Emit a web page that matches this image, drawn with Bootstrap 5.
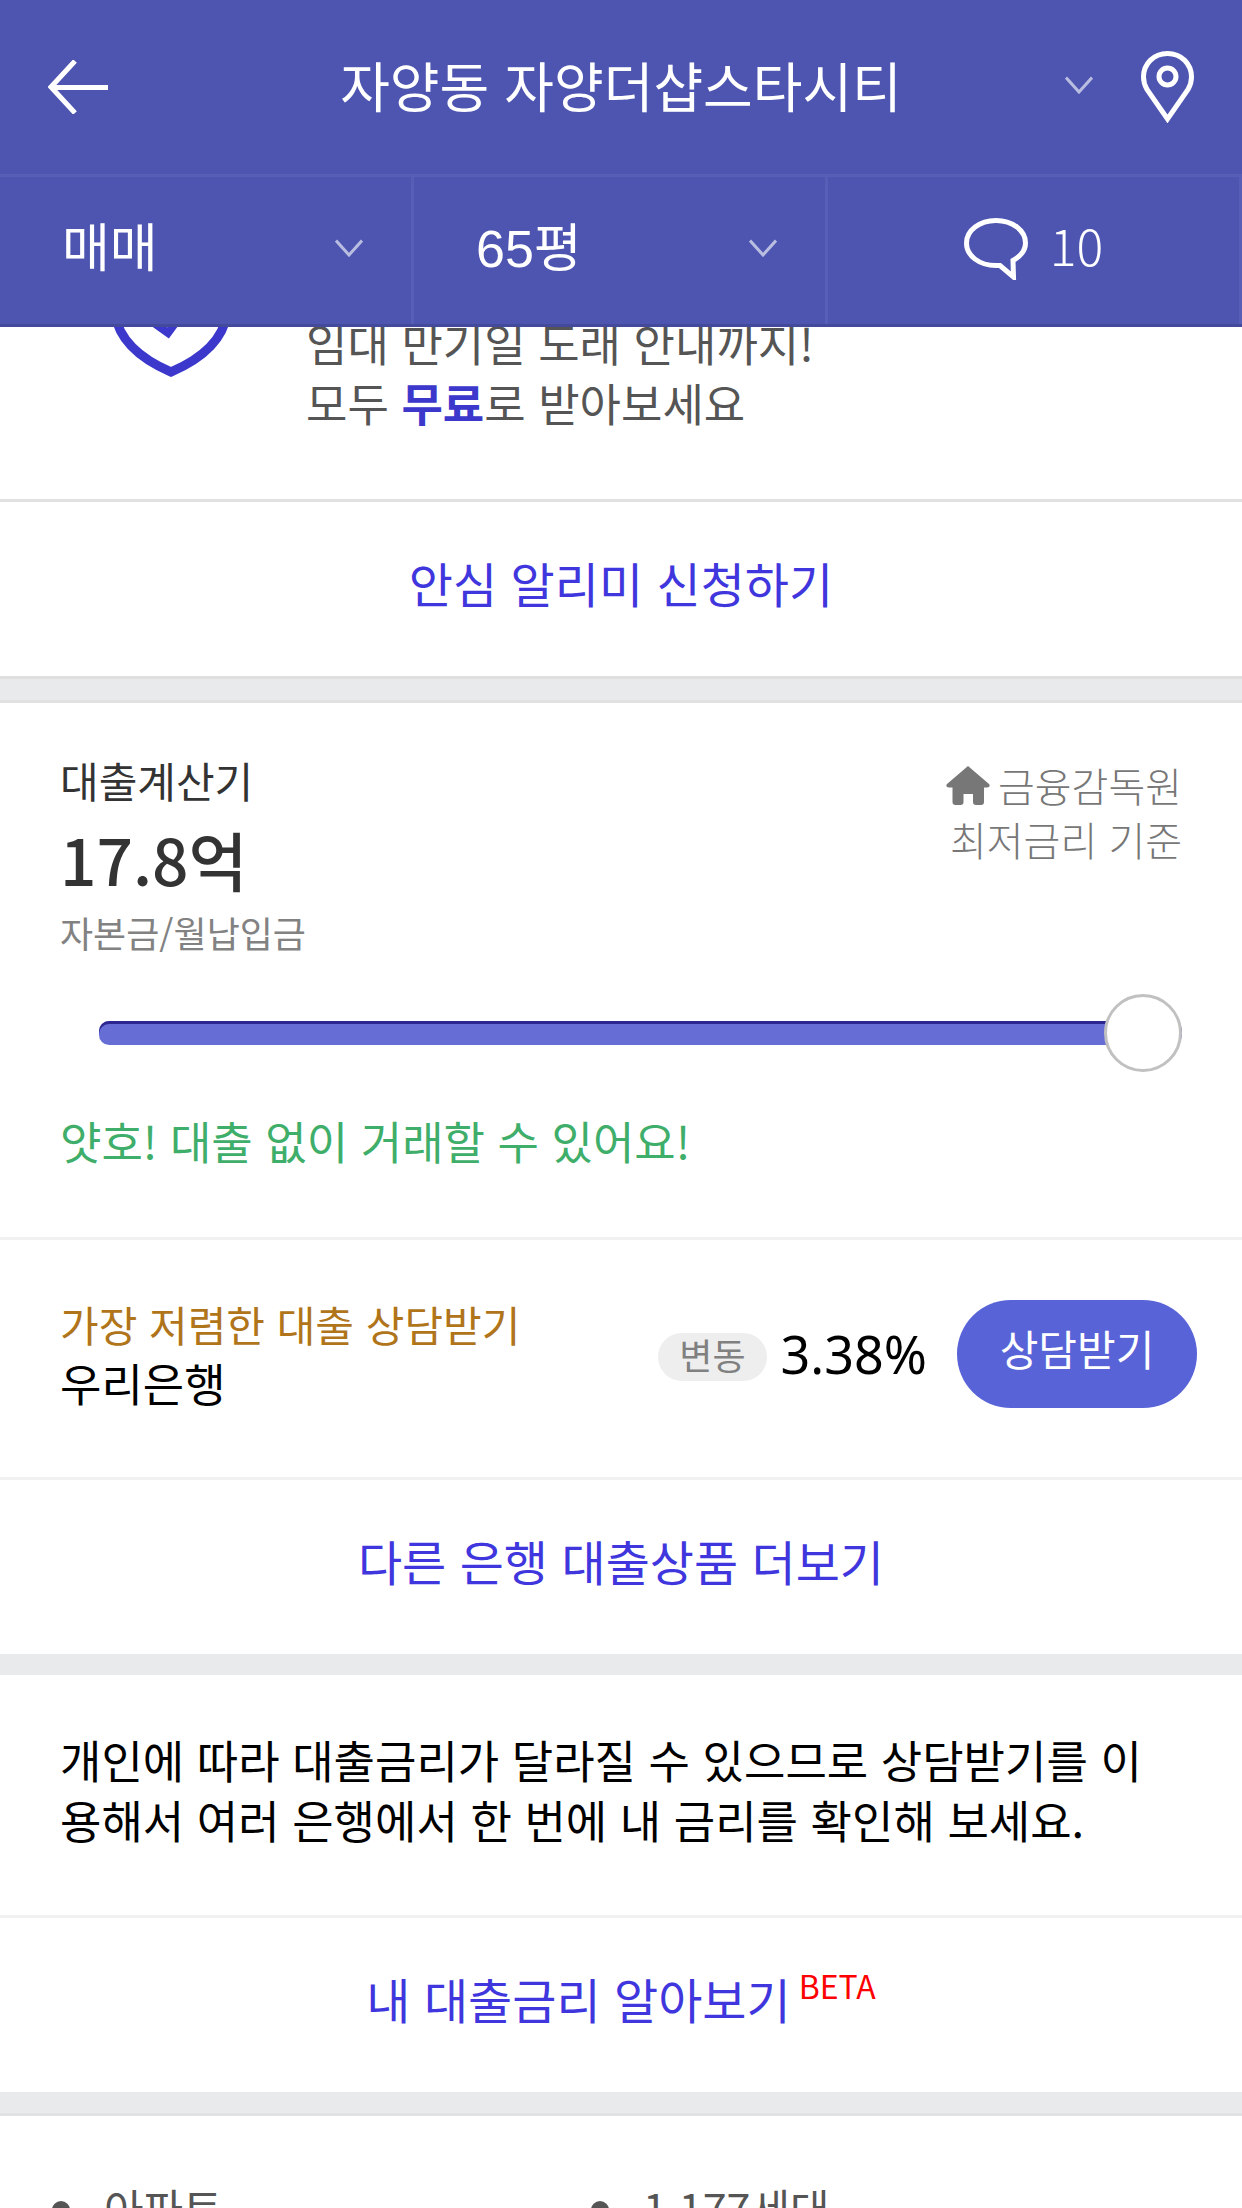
<!DOCTYPE html>
<html lang="ko">
<head>
<meta charset="utf-8">
<meta name="viewport" content="width=device-width, initial-scale=1">
<title>자양동 자양더샵스타시티</title>
<link href="https://cdn.jsdelivr.net/npm/bootstrap@5.3.0/dist/css/bootstrap.min.css" rel="stylesheet">
<style>
  body { font-family: "Noto Sans CJK KR", sans-serif; color: #000; background: #fff; line-height: 60px; }
  svg { display: block; flex: none; }

  .app-header { background: #4d55b1; color: #fff; border-bottom: 3px solid #444a9b; }
  .title-bar { display: grid; grid-template-columns: 1fr auto 1fr; align-items: center; height: 177px; padding: 0 48px; border-bottom: 3px solid #575eb6; }
  .title-bar h1 { font-size: 54px; line-height: 80px; font-weight: 400; margin: 0 0 4px; }
  .title-bar .btn { margin-bottom: 4px; }
  .filter-cell { position: relative; height: 147px; border-right: 3px solid #575eb6; }
  .filter-cell select { appearance: none; width: 100%; height: 100%; padding: 0 62px 4px 62px; border: 0; background: transparent; color: #fff; font-family: "Liberation Sans", "Noto Sans CJK KR", sans-serif; font-size: 52px; }
  .filter-cell select option { color: #000; }
  .filter-cell .chevron { position: absolute; right: 48px; top: 62px; pointer-events: none; }
  .comment-count { font-size: 50px; font-weight: 300; color: #fff; gap: 22px; padding-bottom: 4px; }
  .comment-count span { padding-bottom: 10px; }

  .pad { padding-left: 60px; padding-right: 60px; }
  .alert-intro { margin-top: -80px; padding-top: 66px; padding-bottom: 66px; gap: 24px; font-size: 45px; color: #555; }
  .shield-box { width: 222px; height: 120px; }
  .alert-intro strong { color: #3c38cc; }

  .more-link { display: block; padding: 50px 0 64px; border-top: 3px solid #f1f1f1; text-align: center; font-size: 48px; color: #4036dd; text-decoration: none; }
  .more-link.edge { border-top-color: #e1e1e1; }
  .beta-tag { font-size: 32px; line-height: 32px; color: #f00; top: -20px; margin-left: 8px; }
  .band { height: 21px; background: #e9eaec; }
  .band-both { box-sizing: content-box; border-top: 3px solid #dfdfdf; border-bottom: 3px solid #e1e1e1; }
  .band-low { box-sizing: content-box; border-bottom: 3px solid #e1e2e4; }
  .band-low, .band-both { height: 21px; }

  .calc { padding-top: 45px; padding-bottom: 66px; }
  .calc-title { font-size: 42px; line-height: 64px; color: #333; margin: 0; font-weight: 400; }
  .calc-price { font-size: 64px; line-height: 92px; font-weight: 500; color: #333; }
  .calc-label { display: block; font-size: 36px; line-height: 56px; color: #828282; }
  .calc-source { padding-top: 10px; font-size: 40px; line-height: 54px; font-weight: 300; color: #777; }
  .calc-ok { margin: 39px 0 0; font-size: 45px; color: #3fae6a; }
  .slider-box { padding-left: 39px; margin-top: 34px; }
  .loan-range { display: block; width: 100%; height: 78px; margin: 0; padding: 0; appearance: none; background: transparent; }
  .loan-range::-webkit-slider-runnable-track { height: 24px; border-radius: 10px; background: #666dd5; box-shadow: inset 0 3px #2c2691; }
  .loan-range::-webkit-slider-thumb { appearance: none; width: 78px; height: 78px; margin-top: -27px; border: 3px solid #c1c1c1; border-radius: 50%; background: #fff; }

  .bank-row { padding: 54px 45px 63px 60px; border-top: 3px solid #f1f1f1; }
  .bank-lead { font-size: 42px; color: #b0741a; }
  .bank-name { font-size: 45px; line-height: 58px; padding-bottom: 2px; }
  .rate-type { height: 48px; margin: 6px 14px 0 0; padding: 0 21px; border-radius: 24px; background: #eee; color: #808080; font-size: 36px; line-height: 42px; }
  .rate { font-family: "Noto Sans", sans-serif; font-size: 52px; margin-right: 30px; }
  .btn-consult { width: 240px; height: 108px; padding: 0 0 14px; border: 0; border-radius: 54px; background: #5863d8; color: #fff; font-size: 42px; }
  .notice { margin: 0; padding-top: 55px; padding-bottom: 65px; font-size: 45px; word-break: break-all; }
  .facts { margin: 0; padding: 61px 112px 40px 52px; font-size: 43px; color: #555; }
  .facts li { gap: 34px; }
  .facts li::before { content: ""; width: 18px; height: 18px; margin-top: 6px; border-radius: 50%; background: #555; }
</style>
</head>
<body>
<div class="vh-100 overflow-hidden">
  <header class="app-header sticky-top">
    <div class="title-bar">
      <a href="#" aria-label="뒤로">
        <svg width="60" height="54" viewBox="0 0 60 54" fill="none" stroke="#fff" stroke-width="5"><path d="M27 1 L3 27 L27 53 M3 27.500 H60"/></svg>
      </a>
      <h1>자양동 자양더샵스타시티</h1>
      <div class="d-flex align-items-center justify-content-end">
        <button type="button" class="btn p-0 border-0 me-5" aria-label="단지 선택">
          <svg width="28" height="18" viewBox="0 0 28 18" fill="none" stroke="#b9bde0" stroke-width="3"><path d="M1 1.500 L14 16 L27 1.500"/></svg>
        </button>
        <a href="#" aria-label="지도">
          <svg width="53" height="72" viewBox="0 0 53 72" fill="none" stroke="#fff" stroke-width="5"><path d="M26.500 2.500 C12.500 2.500 2.500 13 2.500 26 C2.500 31 4 35 6 38.500 L26.500 68 L47 38.500 C49 35 50.500 31 50.500 26 C50.500 13 40.500 2.500 26.500 2.500 Z"/><circle cx="26.500" cy="25.500" r="8.500"/></svg>
        </a>
      </div>
    </div>
    <div class="row g-0">
      <div class="col-4 filter-cell">
        <select aria-label="거래 유형"><option>매매</option></select>
        <svg class="chevron" width="28" height="18" viewBox="0 0 28 18" fill="none" stroke="#b9bde0" stroke-width="3"><path d="M1 1.500 L14 16 L27 1.500"/></svg>
      </div>
      <div class="col-4 filter-cell">
        <select aria-label="평형"><option>65평</option></select>
        <svg class="chevron" width="28" height="18" viewBox="0 0 28 18" fill="none" stroke="#b9bde0" stroke-width="3"><path d="M1 1.500 L14 16 L27 1.500"/></svg>
      </div>
      <div class="col-4 filter-cell">
        <a href="#" class="comment-count d-flex h-100 align-items-center justify-content-center text-decoration-none">
          <svg width="64" height="62" viewBox="0 0 64 62" fill="none" stroke="#fff" stroke-width="5"><path d="M49 42.500 C57 38 61.500 32.500 61.500 25 C61.500 12.500 48.500 2.500 32 2.500 C15.500 2.500 2.500 12.500 2.500 25 C2.500 38 15.500 47.500 32 47.500 H36 L49.500 59 Z"/></svg>
          <span>10</span>
        </a>
      </div>
    </div>
  </header>

  <main>
    <section>
      <div class="alert-intro pad d-flex">
        <div class="shield-box d-flex justify-content-center">
          <svg width="126" height="65" viewBox="0 0 126 65" fill="none" stroke="#3c38cc" stroke-width="9"><path d="M7 1 C11 27 33 46 63 59 C93 46 115 27 119 1"/><path d="M46 10 L60 20 L74 1" stroke-width="8"/></svg>
        </div>
        <div>임대 만기일 도래 안내까지!<br>모두 <strong>무료</strong>로 받아보세요</div>
      </div>
      <a href="#" class="more-link edge">안심 알리미 신청하기</a>
    </section>
    <div class="band band-both"></div>

    <section>
      <div class="calc pad">
        <div class="d-flex justify-content-between align-items-start">
          <div>
            <h2 class="calc-title">대출계산기</h2>
            <div class="calc-price">17.8억</div>
            <label class="calc-label" for="capital">자본금/월납입금</label>
          </div>
          <div class="calc-source text-end">
            <div class="d-flex align-items-center justify-content-end gap-2">
              <svg width="44" height="39" viewBox="0 0 44 39" fill="#777"><path d="M22 0 L43 18 Q45 21 41 21.500 H38 V36 Q38 39 35 39 H30 Q27 39 27 36 V28 H17.500 V36 Q17.500 39 14.500 39 H9.500 Q6.500 39 6.500 36 V21.500 H3 Q-1 21 1 18 Z"/></svg>
              <span>금융감독원</span>
            </div>
            <div>최저금리 기준</div>
          </div>
        </div>
        <div class="slider-box">
          <input class="loan-range" type="range" id="capital" min="0" max="100" value="100">
        </div>
        <p class="calc-ok">얏호! 대출 없이 거래할 수 있어요!</p>
      </div>

      <div class="bank-row d-flex align-items-center">
        <div class="me-auto">
          <div class="bank-lead">가장 저렴한 대출 상담받기</div>
          <div class="bank-name">우리은행</div>
        </div>
        <span class="rate-type">변동</span>
        <span class="rate">3.38%</span>
        <button type="button" class="btn btn-consult">상담받기</button>
      </div>
      <a href="#" class="more-link">다른 은행 대출상품 더보기</a>
    </section>
    <div class="band"></div>

    <section>
      <p class="notice pad">개인에 따라 대출금리가 달라질 수 있으므로 상담받기를 이용해서 여러 은행에서 한 번에 내 금리를 확인해 보세요.</p>
      <a href="#" class="more-link">내 대출금리 알아보기<sup class="beta-tag">BETA</sup></a>
    </section>
    <div class="band band-low"></div>

    <ul class="facts list-unstyled row row-cols-2 g-0">
      <li class="col d-flex align-items-center">아파트</li>
      <li class="col d-flex align-items-center">1,177세대</li>
    </ul>
  </main>
</div>
<script src="https://cdn.jsdelivr.net/npm/bootstrap@5.3.0/dist/js/bootstrap.bundle.min.js"></script>
</body>
</html>
